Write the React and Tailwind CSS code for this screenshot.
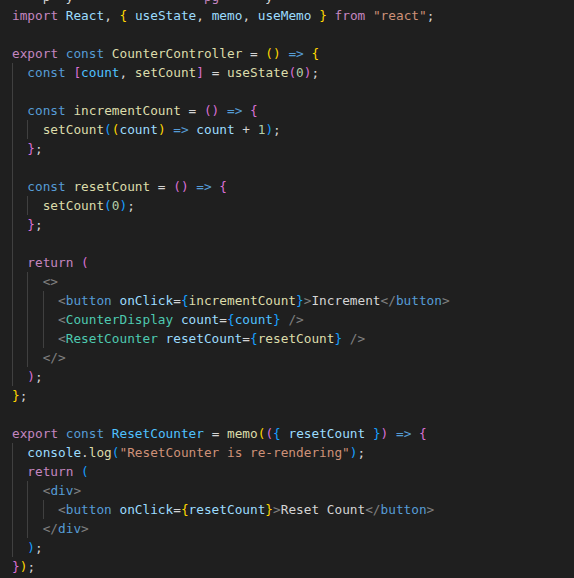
import React from 'react';

// token colours (VS Code Dark Modern)
const C = {
  k: 'text-[#c586c0]',
  s: 'text-[#569cd6]',
  v: 'text-[#9cdcfe]',
  c: 'text-[#4fc1ff]',
  f: 'text-[#dcdcaa]',
  t: 'text-[#4ec9b0]',
  r: 'text-[#ce9178]',
  n: 'text-[#b5cea8]',
  p: 'text-[#d4d4d4]',
  g: 'text-[#808080]',
  y: 'text-[#ffd700]',
  o: 'text-[#da70d6]',
  b: 'text-[#179fff]',
};

const L = (g, ...tokens) => ({ g, tokens });
const T = (k, text) => [k, text];

const lines = [
  L(0, T('p', '    p  y                 '), T('k', 'pg'), T('p', '      y')),
  L(0, T('k', 'import'), T('p', ' '), T('v', 'React'), T('p', ', '), T('y', '{'), T('p', ' '), T('v', 'useState'), T('p', ', '), T('v', 'memo'), T('p', ', '), T('v', 'useMemo'), T('p', ' '), T('y', '}'), T('p', ' '), T('k', 'from'), T('p', ' '), T('r', '"react"'), T('p', ';')),
  L(0),
  L(0, T('k', 'export'), T('p', ' '), T('s', 'const'), T('p', ' '), T('f', 'CounterController'), T('p', ' = '), T('y', '()'), T('p', ' '), T('s', '=>'), T('p', ' '), T('y', '{')),
  L(1, T('s', 'const'), T('p', ' '), T('o', '['), T('c', 'count'), T('p', ', '), T('f', 'setCount'), T('o', ']'), T('p', ' = '), T('f', 'useState'), T('o', '('), T('n', '0'), T('o', ')'), T('p', ';')),
  L(1),
  L(1, T('s', 'const'), T('p', ' '), T('f', 'incrementCount'), T('p', ' = '), T('o', '()'), T('p', ' '), T('s', '=>'), T('p', ' '), T('o', '{')),
  L(2, T('f', 'setCount'), T('b', '('), T('y', '('), T('v', 'count'), T('y', ')'), T('p', ' '), T('s', '=>'), T('p', ' '), T('v', 'count'), T('p', ' + '), T('n', '1'), T('b', ')'), T('p', ';')),
  L(1, T('o', '}'), T('p', ';')),
  L(1),
  L(1, T('s', 'const'), T('p', ' '), T('f', 'resetCount'), T('p', ' = '), T('o', '()'), T('p', ' '), T('s', '=>'), T('p', ' '), T('o', '{')),
  L(2, T('f', 'setCount'), T('b', '('), T('n', '0'), T('b', ')'), T('p', ';')),
  L(1, T('o', '}'), T('p', ';')),
  L(1),
  L(1, T('k', 'return'), T('p', ' '), T('o', '(')),
  L(2, T('g', '<>')),
  L(3, T('g', '<'), T('s', 'button'), T('p', ' '), T('v', 'onClick'), T('p', '='), T('b', '{'), T('f', 'incrementCount'), T('b', '}'), T('g', '>'), T('p', 'Increment'), T('g', '</'), T('s', 'button'), T('g', '>')),
  L(3, T('g', '<'), T('t', 'CounterDisplay'), T('p', ' '), T('v', 'count'), T('p', '='), T('b', '{'), T('c', 'count'), T('b', '}'), T('p', ' '), T('g', '/>')),
  L(3, T('g', '<'), T('t', 'ResetCounter'), T('p', ' '), T('v', 'resetCount'), T('p', '='), T('b', '{'), T('f', 'resetCount'), T('b', '}'), T('p', ' '), T('g', '/>')),
  L(2, T('g', '</>')),
  L(1, T('o', ')'), T('p', ';')),
  L(0, T('y', '}'), T('p', ';')),
  L(0),
  L(0, T('k', 'export'), T('p', ' '), T('s', 'const'), T('p', ' '), T('c', 'ResetCounter'), T('p', ' = '), T('f', 'memo'), T('y', '('), T('o', '('), T('b', '{'), T('p', ' '), T('v', 'resetCount'), T('p', ' '), T('b', '}'), T('o', ')'), T('p', ' '), T('s', '=>'), T('p', ' '), T('o', '{')),
  L(1, T('v', 'console'), T('p', '.'), T('f', 'log'), T('b', '('), T('r', '"ResetCounter is re-rendering"'), T('b', ')'), T('p', ';')),
  L(1, T('k', 'return'), T('p', ' '), T('b', '(')),
  L(2, T('g', '<'), T('s', 'div'), T('g', '>')),
  L(3, T('g', '<'), T('s', 'button'), T('p', ' '), T('v', 'onClick'), T('p', '='), T('y', '{'), T('v', 'resetCount'), T('y', '}'), T('g', '>'), T('p', 'Reset Count'), T('g', '</'), T('s', 'button'), T('g', '>')),
  L(2, T('g', '</'), T('s', 'div'), T('g', '>')),
  L(1, T('b', ')'), T('p', ';')),
  L(0, T('o', '}'), T('y', ')'), T('p', ';')),
];

const Line = ({ g, tokens = [] }) => (
  <div className="flex h-[19px]">
    {Array.from({ length: g }).map((_, i) => (
      <span key={i} className="inline-block h-[19px] w-[2ch] shrink-0 border-l border-[#404040]" />
    ))}
    {tokens.map(([k, text], i) => (
      <span key={i} className={C[k]}>{text}</span>
    ))}
  </div>
);

export default function App() {
  return (
    <div className="h-[578px] w-[574px] overflow-hidden bg-[#1f1f1f] font-['DejaVu_Sans_Mono',monospace] text-[12.75px] leading-[19px] whitespace-pre">
      <div className="-mt-[13px] pl-[12px]">
        {lines.map((l, i) => (
          <Line key={i} {...l} />
        ))}
      </div>
    </div>
  );
}
